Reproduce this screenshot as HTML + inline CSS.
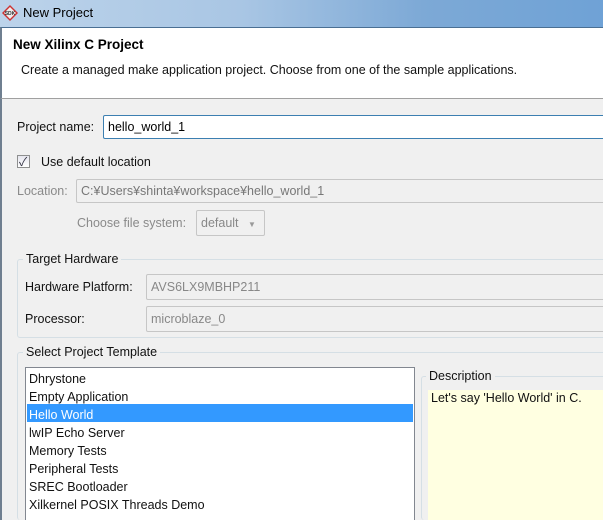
<!DOCTYPE html>
<html style="width:603px;height:520px;overflow:hidden"><head><style>
*{margin:0;padding:0;box-sizing:border-box}
body{width:603px;height:520px;overflow:hidden;background:#f0f0f0;font-family:"Liberation Sans","Noto Sans CJK JP",sans-serif;font-size:12.5px;color:#111;position:relative}
.a{position:absolute;white-space:nowrap}
.tb{left:0;top:0;width:603px;height:27px;background:linear-gradient(90deg,#bcd3ea 0%,#a9c6e4 40%,#7da9d6 70%,#6fa2d6 100%)}
.hdr{left:0;top:27px;width:603px;height:72px;background:#fff;border-top:1px solid #4a6f93;border-bottom:1px solid #a0a0a0;border-left:2px solid #6f7f90}
.inp{position:absolute;border:1px solid #c6c6c6;border-radius:2px;background:#f0f0f0;color:#888;padding-left:4px}
.g{position:absolute;border:1px solid #d5dfe5;border-radius:3px}
.gl{position:absolute;background:#f0f0f0;padding:0 3px;color:#111}
</style></head><body>
<div class="a tb"></div>
<svg class="a" style="left:2px;top:5px" width="16" height="16" viewBox="0 0 16 16"><polygon points="8,0 16,8 8,16 0,8" fill="#c33"/><polygon points="8,2 14,8 8,14 2,8" fill="#eee"/><text x="8" y="10" font-size="5" text-anchor="middle" font-family="Liberation Sans" font-weight="bold" fill="#333">SDK</text></svg>
<div class="a" style="left:23px;top:5px;font-size:13px;color:#000">New Project</div>
<div class="a hdr"></div>
<div class="a" style="left:0;top:99px;width:2px;height:421px;background:#6f7f90"></div>
<div class="a" style="left:13px;top:37px;font-weight:bold;font-size:13.5px;color:#000">New Xilinx C Project</div>
<div class="a" style="left:21px;top:63px">Create a managed make application project. Choose from one of the sample applications.</div>
<div class="a" style="left:17px;top:120px">Project name:</div>
<div class="inp" style="left:103px;top:115px;width:502px;height:24px;background:#fff;border-color:#3c7fb1;color:#000;line-height:22px">hello_world_1</div>
<div class="a" style="left:17px;top:155px;width:13px;height:13px;border:1px solid #8e8f8f;background:linear-gradient(#e6e6ee,#fff)"><span style="position:absolute;left:1px;top:-3px;font-size:12px;color:#334">✓</span></div>
<div class="a" style="left:41px;top:155px">Use default location</div>
<div class="a" style="left:17px;top:184px;color:#8a8a8a">Location:</div>
<div class="inp" style="left:76px;top:179px;width:529px;height:24px;line-height:22px;color:#777">C:¥Users¥shinta¥workspace¥hello_world_1</div>
<div class="a" style="left:77px;top:216px;color:#8a8a8a">Choose file system:</div>
<div class="inp" style="left:196px;top:210px;width:69px;height:26px;line-height:24px;color:#888">default <span style="font-size:8px;margin-left:6px;color:#999">▼</span></div>
<div class="g" style="left:17px;top:259px;width:600px;height:79px"></div>
<div class="gl" style="left:23px;top:252px">Target Hardware</div>
<div class="a" style="left:25px;top:280px">Hardware Platform:</div>
<div class="inp" style="left:146px;top:274px;width:470px;height:26px;line-height:24px">AVS6LX9MBHP211</div>
<div class="a" style="left:25px;top:312px">Processor:</div>
<div class="inp" style="left:146px;top:306px;width:470px;height:26px;line-height:24px">microblaze_0</div>
<div class="g" style="left:17px;top:352px;width:600px;height:168px;border-bottom:none"></div>
<div class="gl" style="left:23px;top:345px">Select Project Template</div>
<div class="a" style="left:25px;top:367px;width:390px;height:153px;background:#fff;border:1px solid #828790;border-bottom:none"></div>
<div class="a" style="left:27px;top:404px;width:386px;height:18px;background:#3399ff"></div>
<div class="a" style="left:29px;top:370px;line-height:18px">Dhrystone<br>Empty Application<br><span style="color:#fff">Hello World</span><br>lwIP Echo Server<br>Memory Tests<br>Peripheral Tests<br>SREC Bootloader<br>Xilkernel POSIX Threads Demo</div>
<div class="g" style="left:421px;top:376px;width:200px;height:144px;border-bottom:none"></div>
<div class="gl" style="left:426px;top:369px">Description</div>
<div class="a" style="left:428px;top:390px;width:175px;height:130px;background:#ffffe1"></div>
<div class="a" style="left:431px;top:391px">Let's say 'Hello World' in C.</div>
</body></html>
